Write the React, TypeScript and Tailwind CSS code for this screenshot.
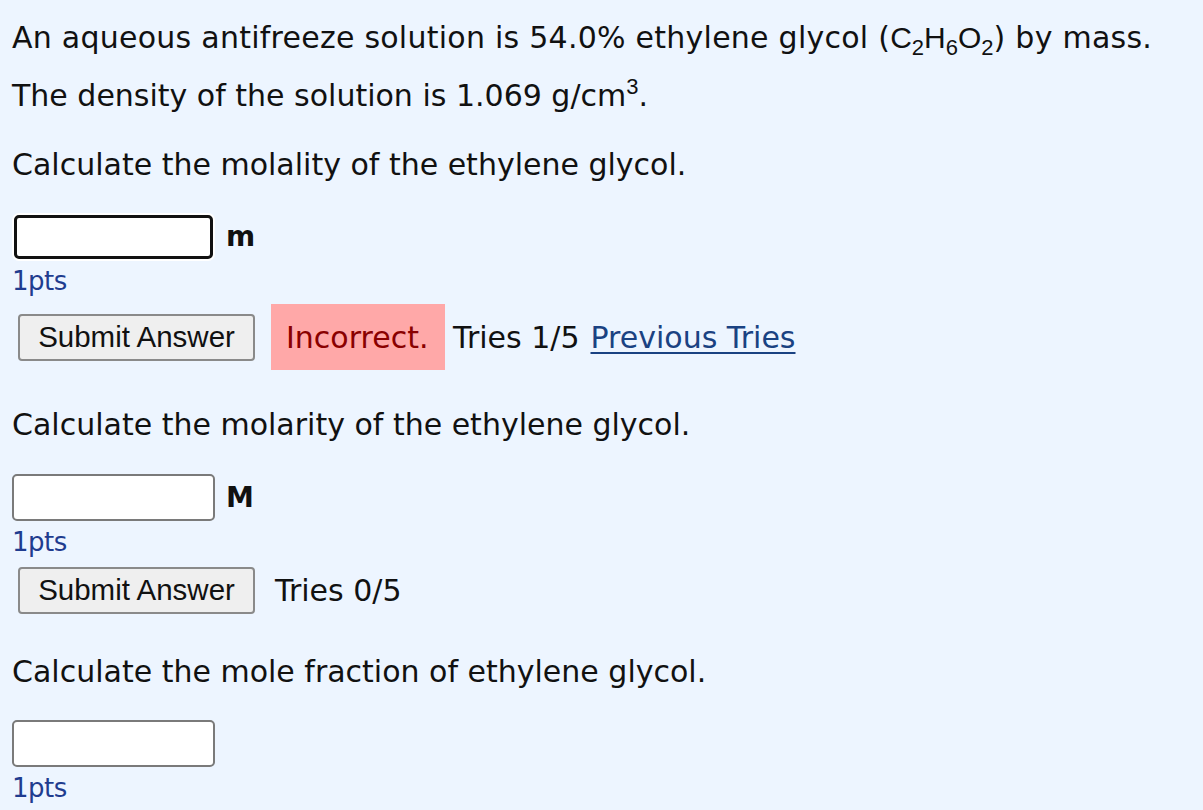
import React from "react";

const body = "font-['DejaVu_Sans',sans-serif]";
const arial = "font-['Liberation_Sans',Arial,sans-serif]";

function Input({ focused = false }: { focused?: boolean }) {
  return focused ? (
    <div className="w-[203px] h-[48px] rounded-[7px] bg-white p-[2px]">
      <div className="w-full h-full rounded-[5px] border-[3px] border-[#111] bg-white" />
    </div>
  ) : (
    <div className="w-[203px] h-[47px] rounded-[5px] border-[2px] border-[#7a7a7a] bg-white" />
  );
}

function SubmitButton() {
  return (
    <div
      className={`${arial} ml-[6px] w-[237px] h-[47px] flex items-center justify-center rounded-[4px] border-[2px] border-[#8a8a8a] bg-[#efefef] text-[29.5px] text-[#111]`}
    >
      Submit Answer
    </div>
  );
}

function Pts() {
  return <div className="leading-[30px] text-[26px] text-[#1f3c8f] tracking-[-0.5px]">1pts</div>;
}

export default function App() {
  return (
    <div className={`${body} w-[1203px] min-h-[810px] bg-[#edf5ff] px-[12px] text-[30px] text-[#111]`}>
      <div className="pt-[9px]">
        <div className="h-[58px] leading-[58px] tracking-[0.25px]">
          An aqueous antifreeze solution is 54.0% ethylene glycol (
          <span className={`${arial} leading-none tracking-normal`}>
            C<span className="text-[22px] leading-none align-[-7px]">2</span>H
            <span className="text-[22px] leading-none align-[-7px]">6</span>O
            <span className="text-[22px] leading-none align-[-7px]">2</span>
          </span>
          ) by mass.
        </div>
        <div className="h-[58px] leading-[58px]">
          The density of the solution is 1.069 g/cm
          <span className={`${arial} text-[22px] leading-none align-[12px]`}>3</span>.
        </div>
      </div>

      <p className="mt-[20px] leading-[40px]">Calculate the molality of the ethylene glycol.</p>

      <div className="mt-[28px] flex items-center h-[48px]">
        <Input focused />
        <span className="ml-[11px] font-bold text-[28px]">m</span>
      </div>
      <div className="mt-[5px]">
        <Pts />
      </div>

      <div className="mt-[8px] flex items-center h-[66px]">
        <SubmitButton />
        <div className="ml-[16px] h-[66px] w-[174px] pl-[15px] flex items-center bg-[#ffa8a8] text-[#8a0000]">Incorrect.</div>
        <span className="ml-[8px]">Tries 1/5</span>
        <a href="#" className="ml-[11px] text-[#1a4282] underline underline-offset-[4px] decoration-[2px]">
          Previous Tries
        </a>
      </div>

      <p className="mt-[35px] leading-[40px]">Calculate the molarity of the ethylene glycol.</p>

      <div className="mt-[29px] flex items-center h-[47px]">
        <Input />
        <span className="ml-[11px] font-bold text-[28px]">M</span>
      </div>
      <div className="mt-[6px]">
        <Pts />
      </div>

      <div className="mt-[10px] flex items-center h-[47px]">
        <SubmitButton />
        <span className="ml-[20px]">Tries 0/5</span>
      </div>

      <p className="mt-[38px] leading-[40px]">Calculate the mole fraction of ethylene glycol.</p>

      <div className="mt-[28px] flex items-center h-[47px]">
        <Input />
      </div>
      <div className="mt-[6px]">
        <Pts />
      </div>
    </div>
  );
}
